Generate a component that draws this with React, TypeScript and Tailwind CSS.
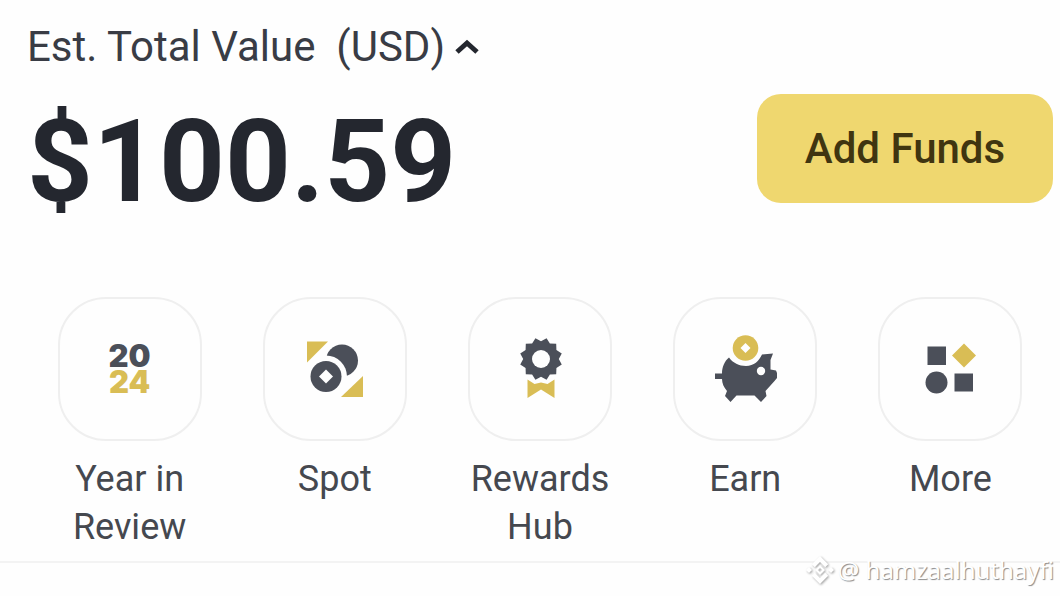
import type { ReactNode } from "react";

function YearIcon() {
  return (
    <span className="flex flex-col items-center font-['Inter',sans-serif] text-[31px] leading-[26px] font-black">
      <span className="text-[#4b4f59]">20</span>
      <span className="text-[#d9bd55]">24</span>
    </span>
  );
}

function SpotIcon() {
  return (
    <svg className="size-20" viewBox="0 0 80 80" aria-hidden="true">
      <path d="M12 12.5H33L12 33.5Z" fill="#d9bd55" />
      <path d="M68 47V68H46Z" fill="#d9bd55" />
      <circle cx="47" cy="31.5" r="16" fill="#4b4f59" />
      <circle cx="31" cy="47.5" r="21" fill="#fefefe" />
      <circle cx="31" cy="47.5" r="15.5" fill="#4b4f59" />
      <path d="M31 40.5L38 47.5L31 54.5L24 47.5Z" fill="#fefefe" />
    </svg>
  );
}

const gearPoints = Array.from({ length: 24 }, (_, i) => {
  const angle = (i * Math.PI) / 12 + Math.PI / 12;
  const radius = i % 2 === 0 ? 21.5 : 17.8;
  return `${41 + radius * Math.sin(angle)},${30 - radius * Math.cos(angle)}`;
}).join(" ");

function RewardsIcon() {
  return (
    <svg className="size-20" viewBox="0 0 80 80" aria-hidden="true">
      <polygon points={gearPoints} fill="#4b4f59" />
      <circle cx="41" cy="30" r="9" fill="#fefefe" />
      <path d="M27.5 50.5L34.5 55L41 53.5L47.5 55L54.5 50.5V69L41 60.5L27.5 69Z" fill="#d9bd55" />
    </svg>
  );
}

function EarnIcon() {
  return (
    <svg className="size-20" viewBox="0 0 80 80" aria-hidden="true">
      <path
        d="M24 28.5C28 34 34 37 41 37C49 37 54 32 57 25.5L68 24.5L65.5 31V40.5L71 41.5L72 44V49L69.5 52L60.5 62L61.5 67L56 73L49.5 66.5H31.5L25.5 73L20 67L22 62C19 58.5 17 54.5 17 50H10V44.5H17C17 38 19.5 32 24 28.5Z"
        fill="#4b4f59"
      />
      <circle cx="56" cy="42" r="4.2" fill="#fefefe" />
      <circle cx="40.5" cy="19" r="12.8" fill="#d9bd55" />
      <path d="M40.5 14L45.5 19L40.5 24L35.5 19Z" fill="#fefefe" />
    </svg>
  );
}

function MoreIcon() {
  return (
    <svg className="size-20" viewBox="0 0 80 80" aria-hidden="true">
      <path d="M17.5 17.5H36V36H17.5Z" fill="#4b4f59" />
      <path d="M54 14.5L66 26.5L54 38.5L42 26.5Z" fill="#d9bd55" />
      <circle cx="26.5" cy="53.5" r="11" fill="#4b4f59" />
      <path d="M44.5 44.5H63V62.5H44.5Z" fill="#4b4f59" />
    </svg>
  );
}

const shortcuts: { label: string; icon: ReactNode }[] = [
  { label: "Year in Review", icon: <YearIcon /> },
  { label: "Spot", icon: <SpotIcon /> },
  { label: "Rewards Hub", icon: <RewardsIcon /> },
  { label: "Earn", icon: <EarnIcon /> },
  { label: "More", icon: <MoreIcon /> },
];

function Watermark() {
  return (
    <div className="absolute right-[6px] bottom-[10px] flex items-center gap-1 text-white">
      <svg className="size-7 drop-shadow-[1px_1px_1px_#a0a0a0]" viewBox="0 0 28 28" fill="#ffffff" aria-hidden="true">
        <path d="M14 0L22.2 8.2L19.2 11.2L14 6L8.8 11.2L5.8 8.2Z" />
        <path d="M14 28L22.2 19.8L19.2 16.8L14 22L8.8 16.8L5.8 19.8Z" />
        <path d="M3 11L6 14L3 17L0 14Z" />
        <path d="M25 11L28 14L25 17L22 14Z" />
        <path d="M14 9L19 14L14 19L9 14ZM14 12L12 14L14 16L16 14Z" fillRule="evenodd" />
      </svg>
      <span className="font-['Noto_Sans',sans-serif] text-2xl leading-8 [text-shadow:1px_1px_1px_#8a8a8a]">
        @ hamzaalhuthayfi
      </span>
    </div>
  );
}

export default function App() {
  return (
    <main className="relative min-h-screen bg-[#fefefe] font-['Roboto',sans-serif]">
      <section className="border-b-2 border-[#f3f3f3] pt-[19px] pr-[7px] pb-[10px] pl-[27px]">
        <button type="button" className="flex items-center gap-[10px] text-[42px] leading-[56px] text-[#393c45]">
          <span className="whitespace-pre">Est. Total Value  (USD)</span>
          <svg className="h-4 w-6" viewBox="0 0 24 16" fill="none" stroke="#24272f" strokeWidth="5" aria-hidden="true">
            <path d="M2 13L12 4L22 13" />
          </svg>
        </button>

        <div className="mt-[19px] flex items-start justify-between">
          <p className="pt-2 text-[115px] leading-[120px] font-bold text-[#24272f]">$100.59</p>
          <button
            type="button"
            className="h-[109px] w-[296px] rounded-3xl bg-[#efd76f] text-[42px] font-medium text-[#403510]"
          >
            Add Funds
          </button>
        </div>

        <nav className="mt-[75px] grid grid-cols-5">
          {shortcuts.map(({ label, icon }) => (
            <a key={label} href="#" className="flex flex-col items-center gap-[14px]">
              <span className="flex size-36 items-center justify-center rounded-[48px] border-2 border-[#efefef]">
                {icon}
              </span>
              <span className="max-w-[150px] text-center text-[36px] leading-[48px] text-[#45484f]">{label}</span>
            </a>
          ))}
        </nav>
      </section>
      <Watermark />
    </main>
  );
}
